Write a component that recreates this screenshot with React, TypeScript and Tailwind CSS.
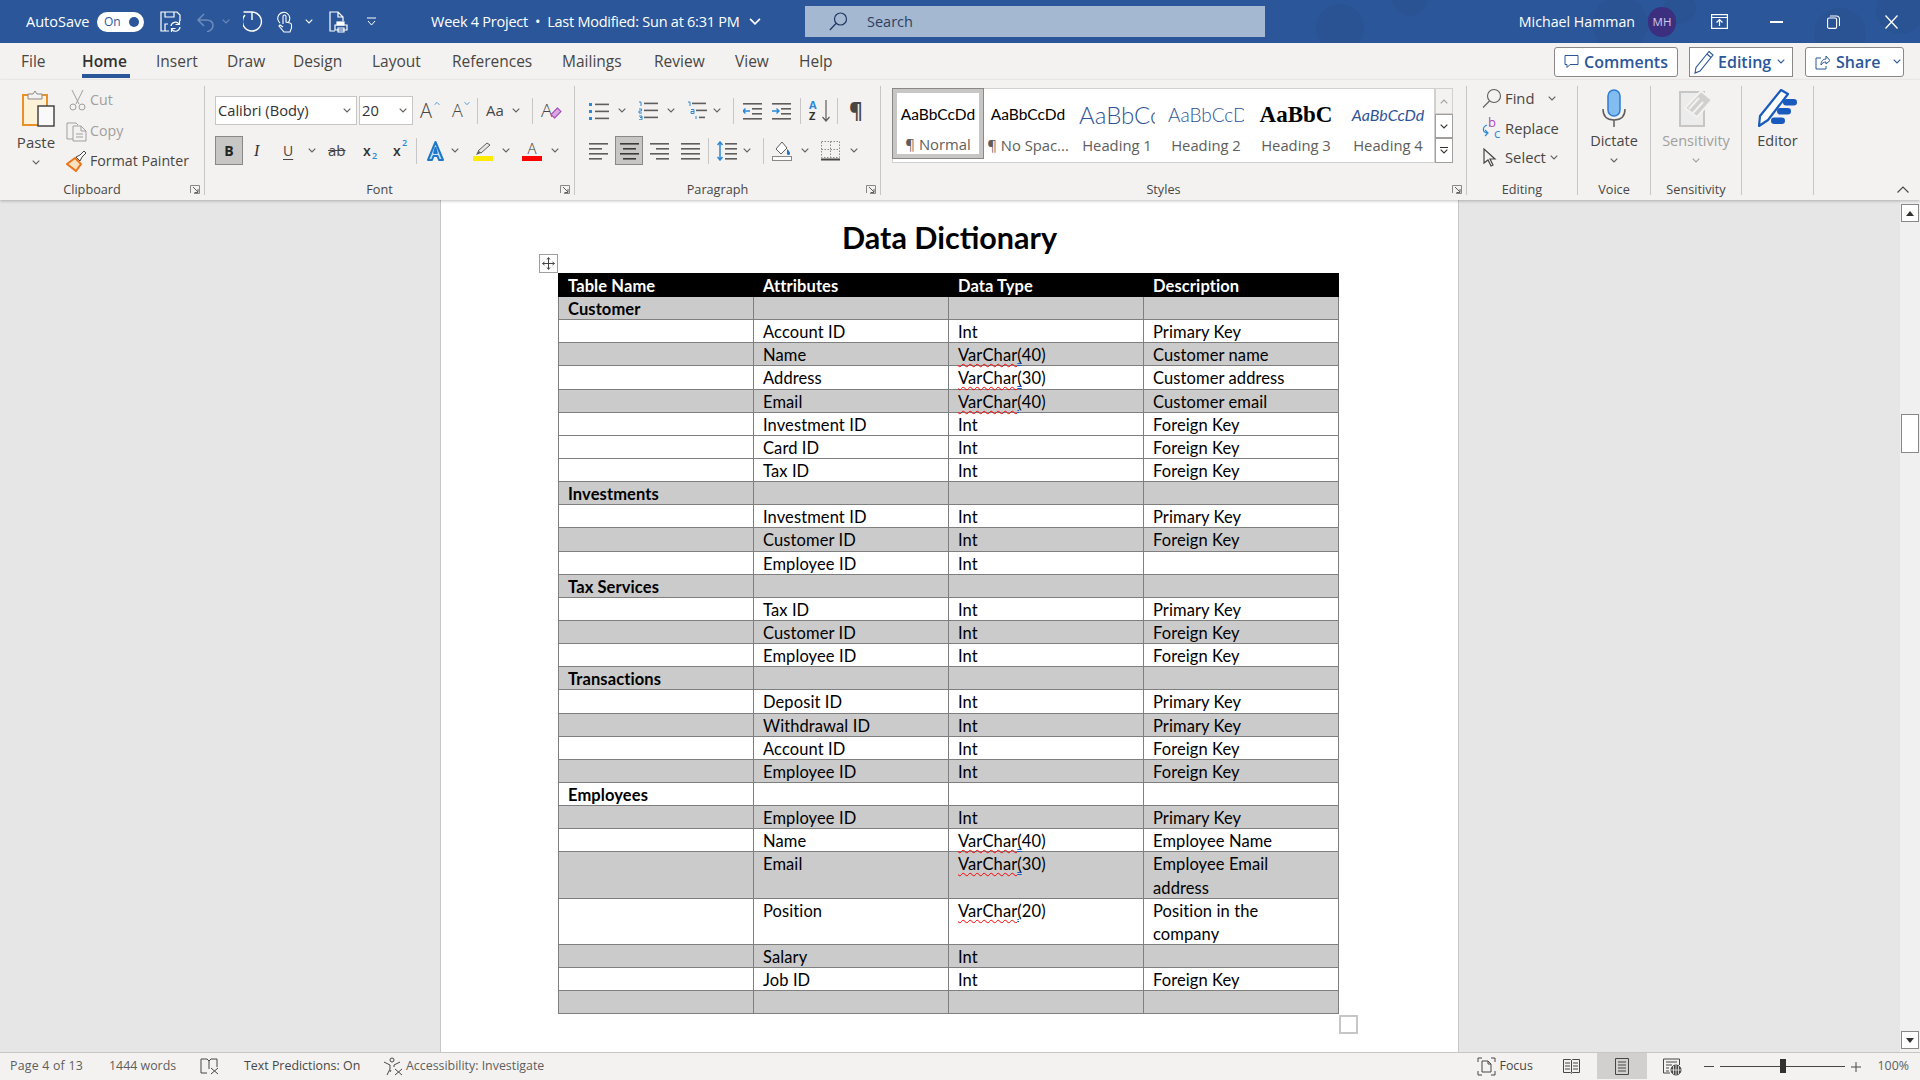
import type { ReactNode } from 'react';

const G = '#605e5c';
const BLUE = '#2b88d8';

function Chev({ className = '', color = G }: { className?: string; color?: string }) {
  return (
    <svg width="8" height="5" viewBox="0 0 8 5" className={`shrink-0 ${className}`}>
      <path d="M.7.7 4 4 7.3.7" fill="none" stroke={color} strokeWidth="1.1" />
    </svg>
  );
}

function Sep({ className = '' }: { className?: string }) {
  return <div className={`w-px h-[26px] bg-[#c8c6c4] shrink-0 ${className}`} />;
}

function Launcher() {
  return (
    <svg width="10" height="9" viewBox="0 0 10 9" className="absolute right-[4px] bottom-[1px]">
      <path d="M.5 8V.5H9.5V8.500H4" fill="none" stroke="#8a8886" />
      <path d="M3 2l5 5M8 4v3.500H4.500" fill="none" stroke={G} />
    </svg>
  );
}

function Group({ className, label, launcher, children }: { className: string; label: string; launcher?: boolean; children: ReactNode }) {
  return (
    <div className={`relative flex flex-col shrink-0 h-full border-r border-[#c8c6c4] ${className}`}>
      <div className="flex-1 min-h-0">{children}</div>
      <div className={`h-[10px] flex items-center justify-center text-[12.700px] text-[#484644] whitespace-nowrap ${launcher ? 'pr-[20px]' : ''}`}>{label}</div>
      {launcher && <Launcher />}
    </div>
  );
}

function AlignIcon({ kind }: { kind: 'l' | 'c' | 'r' | 'j' }) {
  const rows = [1, 6, 11, 16];
  const short = (i: number) => (i % 2 === 1 ? 6 : 0);
  return (
    <svg width="19" height="18" viewBox="0 0 19 18" className="shrink-0">
      {rows.map((y, i) => {
        const s = kind === 'j' ? 0 : short(i);
        const x = kind === 'l' || kind === 'j' ? 0 : kind === 'r' ? s : s / 2;
        return <rect key={y} x={x} y={y} width={19 - s} height="1.600" fill={kind === 'c' ? '#3b3a39' : G} />;
      })}
    </svg>
  );
}

function BulletIcon() {
  return (
    <svg width="20" height="18" viewBox="0 0 20 18" className="shrink-0">
      {[1, 8, 15].map((y) => (
        <g key={y}>
          <rect x="0" y={y} width="3" height="3" fill={BLUE} />
          <rect x="6" y={y + 0.6} width="14" height="1.600" fill={G} />
        </g>
      ))}
    </svg>
  );
}

function NumberIcon() {
  return (
    <svg width="20" height="19" viewBox="0 0 20 19" className="shrink-0">
      {[1, 8, 15].map((y) => (
        <rect key={y} x="6" y={y + 0.6} width="14" height="1.600" fill={G} />
      ))}
      <path d="M1 1h2v4M1 8h2.500v2h-2.500v2h3M1 15h3v1.500h-2h2v2.300h-3" fill="none" stroke={BLUE} strokeWidth="1" />
    </svg>
  );
}

function MultiIcon() {
  return (
    <svg width="20" height="19" viewBox="0 0 20 19" className="shrink-0">
      <rect x="5" y="1.600" width="14" height="1.600" fill={G} />
      <rect x="9" y="8.600" width="11" height="1.600" fill={G} />
      <rect x="12" y="15.600" width="6" height="1.600" fill={G} />
      <path d="M1 1h2v4M4 8.500h3v4h-3v-2h3M9 15v3" fill="none" stroke={BLUE} strokeWidth="1" />
    </svg>
  );
}

function IndentIcon({ inc }: { inc?: boolean }) {
  return (
    <svg width="19" height="18" viewBox="0 0 19 18" className="shrink-0">
      <rect x="0" y="1" width="19" height="1.600" fill={G} />
      <rect x="9" y="6" width="10" height="1.600" fill={G} />
      <rect x="9" y="11" width="10" height="1.600" fill={G} />
      <rect x="0" y="16" width="19" height="1.600" fill={G} />
      <path d={inc ? 'M0 9h7M4.500 6.500 7 9l-2.500 2.500' : 'M7 9H0M2.500 6.500 0 9l2.500 2.500'} fill="none" stroke={BLUE} strokeWidth="1.400" />
    </svg>
  );
}

const tabs = [
  ['File', 'w-[61px]'],
  ['Home', 'w-[74px]'],
  ['Insert', 'w-[71px]'],
  ['Draw', 'w-[66px]'],
  ['Design', 'w-[79px]'],
  ['Layout', 'w-[80px]'],
  ['References', 'w-[110px]'],
  ['Mailings', 'w-[92px]'],
  ['Review', 'w-[81px]'],
  ['View', 'w-[64px]'],
  ['Help', 'w-[50px]'],
];

type Row = [string, string, string, string, boolean, boolean?];

const rows: Row[] = [
  ['Customer', '', '', '', true],
  ['', 'Account ID', 'Int', 'Primary Key', false],
  ['', 'Name', 'VarChar(40)', 'Customer name', true],
  ['', 'Address', 'VarChar(30)', 'Customer address', false],
  ['', 'Email', 'VarChar(40)', 'Customer email', true],
  ['', 'Investment ID', 'Int', 'Foreign Key', false],
  ['', 'Card ID', 'Int', 'Foreign Key', false],
  ['', 'Tax ID', 'Int', 'Foreign Key', false],
  ['Investments', '', '', '', true],
  ['', 'Investment ID', 'Int', 'Primary Key', false],
  ['', 'Customer ID', 'Int', 'Foreign Key', true],
  ['', 'Employee ID', 'Int', '', false],
  ['Tax Services', '', '', '', true],
  ['', 'Tax ID', 'Int', 'Primary Key', false],
  ['', 'Customer ID', 'Int', 'Foreign Key', true],
  ['', 'Employee ID', 'Int', 'Foreign Key', false],
  ['Transactions', '', '', '', true],
  ['', 'Deposit ID', 'Int', 'Primary Key', false],
  ['', 'Withdrawal ID', 'Int', 'Primary Key', true],
  ['', 'Account ID', 'Int', 'Foreign Key', false],
  ['', 'Employee ID', 'Int', 'Foreign Key', true],
  ['Employees', '', '', '', false],
  ['', 'Employee ID', 'Int', 'Primary Key', true],
  ['', 'Name', 'VarChar(40)', 'Employee Name', false],
  ['', 'Email', 'VarChar(30)', 'Employee Email address', true, true],
  ['', 'Position', 'VarChar(20)', 'Position in the company', false, true],
  ['', 'Salary', 'Int', '', true],
  ['', 'Job ID', 'Int', 'Foreign Key', false],
  ['', '', '', '', true],
];

function TypeCell({ value }: { value: string }) {
  if (!value.startsWith('VarChar')) return <>{value}</>;
  return (
    <>
      <span className="underline decoration-wavy decoration-[#ff0000] decoration-1 underline-offset-[2px]">VarChar</span>
      <span className="underline decoration-[#1a5fd0] decoration-double decoration-1 underline-offset-[2px]">(</span>
      {value.slice(8)}
    </>
  );
}

const styleItems = [
  { name: '¶ Normal', sample: 'AaBbCcDd', w: 'w-[90px]', clip: '', cls: 'text-[15.500px] font-["Lato",sans-serif] text-black' },
  { name: '¶ No Spac...', sample: 'AaBbCcDd', w: 'w-[90px]', clip: '', cls: 'text-[15.500px] font-["Lato",sans-serif] text-black' },
  { name: 'Heading 1', sample: 'AaBbCc', w: 'w-[88px]', clip: 'max-w-[76px] overflow-hidden', cls: 'text-[24px] font-light font-["Lato",sans-serif] text-[#2f5496]' },
  { name: 'Heading 2', sample: 'AaBbCcD', w: 'w-[90px]', clip: 'max-w-[76px] overflow-hidden', cls: 'text-[19px] font-light font-["Lato",sans-serif] text-[#2f5496]' },
  { name: 'Heading 3', sample: 'AaBbC', w: 'w-[90px]', clip: '', cls: 'text-[23px] font-bold font-["Liberation_Serif",serif] text-black' },
  { name: 'Heading 4', sample: 'AaBbCcDd', w: 'w-[94px]', clip: '', cls: 'text-[16px] italic font-["Lato",sans-serif] text-[#2f5496]' },
];

export default function App() {
  return (
    <div className="w-[1920px] h-[1080px] flex flex-col overflow-hidden font-['Open_Sans',sans-serif] text-[14px] text-[#484644]">
      {/* title bar */}
      <div className="relative h-[43px] shrink-0 bg-[#2b579a] flex items-center text-white text-[14.500px] overflow-hidden">
        <svg className="absolute right-0 top-0" width="640" height="43" viewBox="0 0 640 43" fill="#274f8c" opacity="0.45">
          <circle cx="60" cy="28" r="24" />
          <circle cx="130" cy="-2" r="18" />
          <circle cx="340" cy="24" r="28" />
          <circle cx="400" cy="8" r="16" />
          <circle cx="560" cy="34" r="26" />
          <circle cx="620" cy="10" r="24" />
        </svg>
        <span className="relative ml-[26px] w-[71px] shrink-0 whitespace-nowrap">AutoSave</span>
        <div className="relative w-[47px] h-[20px] shrink-0 rounded-full bg-white flex items-center justify-between pl-[7px] pr-[5px] text-[12px] text-[#2b579a]">
          On<span className="w-[10px] h-[10px] rounded-full bg-[#2b579a]" />
        </div>
        <svg width="21" height="21" viewBox="0 0 21 21" className="relative ml-[16px] shrink-0" fill="none" stroke="#fff" strokeWidth="1.200">
          <path d="M9 20H1V1h16l3 3v6M5 1v5h9V1M5 20v-7h3" />
          <path d="M11 15a4.500 4.500 0 0 1 8-2M20 16a4.500 4.500 0 0 1-8 2.500M19.500 9.500v4h-4M11.500 21v-3.500h4" />
        </svg>
        <svg width="18" height="20" viewBox="0 0 18 20" className="relative ml-[15px] shrink-0" fill="none" stroke="#6d8cbc" strokeWidth="1.500">
          <path d="M8 2 2 8l6 6M2 8h8c5 0 7 2.500 7 5.500S15 18.500 11 20" />
        </svg>
        <Chev className="relative ml-[8px]" color="#6d8cbc" />
        <svg width="21" height="21" viewBox="0 0 21 21" className="relative ml-[13px] shrink-0" fill="none" stroke="#fff" strokeWidth="1.400">
          <path d="M.5 1H9v8M9 1a9.500 9.500 0 1 1-7 3" />
        </svg>
        <svg width="16" height="22" viewBox="0 0 16 22" className="relative ml-[13px] shrink-0" fill="none" stroke="#fff" strokeWidth="1.100">
          <path d="M6 13V5.500a1.500 1.500 0 0 1 3 0V11l4 1a2 2 0 0 1 1.500 2v3L13 21H7l-5-6 1-1 3 2" />
          <path d="M3 12a6 6 0 1 1 8.500-1" />
        </svg>
        <Chev className="relative ml-[12px]" color="#fff" />
        <svg width="19" height="22" viewBox="0 0 19 22" className="relative ml-[16px] shrink-0" fill="none" stroke="#fff" strokeWidth="1.200">
          <path d="M6 20H1V1h8l5 5v4M9 1v5h5" />
          <rect x="8" y="11" width="7" height="3" fill="#fff" />
          <path d="M6 14h12v5H6zM9 17h6v4H9z" />
        </svg>
        <svg width="9" height="9" viewBox="0 0 9 9" className="relative ml-[19px] shrink-0" fill="none" stroke="#fff">
          <path d="M0 1h9M1 4l3.500 4L8 4" />
        </svg>
        <span className="relative ml-[55px] w-[320px] shrink-0 whitespace-nowrap tracking-[-0.25px]">Week 4 Project&nbsp; •&nbsp; Last Modified: Sun at 6:31 PM</span>
        <Chev className="relative scale-150" color="#fff" />
        <div className="relative ml-[46px] w-[460px] h-[31px] shrink-0 bg-[#a5b8d2] flex items-center text-[#2b3f5f]">
          <svg width="19" height="19" viewBox="0 0 19 19" className="ml-[24px] shrink-0" fill="none" stroke="#1f3763" strokeWidth="1.200">
            <circle cx="11.500" cy="7" r="6" />
            <path d="M7 11.500.8 18" />
          </svg>
          <span className="ml-[19px]">Search</span>
        </div>
        <span className="relative ml-auto whitespace-nowrap text-[14.200px]">Michael Hamman</span>
        <div className="relative ml-[13px] w-[28px] h-[30px] shrink-0 rounded-full bg-[#3c2f80] flex items-center justify-center text-[11.500px] text-[#cfcbe8]">MH</div>
        <svg width="17" height="15" viewBox="0 0 17 15" className="relative ml-[35px] shrink-0" fill="none" stroke="#fff" strokeWidth="1.200">
          <rect x=".6" y=".6" width="15.800" height="13.800" />
          <path d="M.6 3.500h15.800M8.500 12V6M5.500 8.500l3-3 3 3" />
        </svg>
        <div className="relative ml-[42px] w-[13px] h-[2px] shrink-0 bg-white" />
        <svg width="13" height="14" viewBox="0 0 13 14" className="relative ml-[44px] shrink-0" fill="none" stroke="#fff" strokeWidth="1.100">
          <rect x=".6" y="3" width="9" height="10.400" rx="1.500" />
          <path d="M3 1h6.500a3 3 0 0 1 3 3v7" />
        </svg>
        <svg width="13" height="14" viewBox="0 0 13 14" className="relative ml-[45px] mr-[22px] shrink-0" fill="none" stroke="#fff" strokeWidth="1.300">
          <path d="M.5.500l12 13M12.500.500l-12 13" />
        </svg>
      </div>

      {/* tabs */}
      <div className="h-[37px] shrink-0 bg-[#f3f2f1] flex items-center pl-[21px] text-[15.500px]">
        {tabs.map(([name, w]) => (
          <div key={name} className={`${w} shrink-0`}>
            {name === 'Home' ? (
              <span className="relative font-semibold text-[#323130]">
                {name}
                <span className="absolute left-0 w-[48px] top-[24px] h-[4px] bg-[#2b579a]" />
              </span>
            ) : (
              name
            )}
          </div>
        ))}
        <div className="ml-auto mr-[16px] flex items-center text-[16px] font-semibold text-[#2b579a]">
          <div className="w-[124px] h-[30px] bg-white border border-[#8a8886] rounded-[3px] flex items-center pl-[9px]">
            <svg width="15" height="15" viewBox="0 0 15 15" fill="none" stroke="#2b579a" className="shrink-0">
              <path d="M1 1.500h13v9H6l-3 3v-3H1z" />
            </svg>
            <span className="ml-[5px]">Comments</span>
          </div>
          <div className="ml-[11px] w-[104px] h-[30px] bg-white border border-[#8a8886] flex items-center pl-[4px]">
            <svg width="20" height="24" viewBox="0 0 20 24" fill="none" stroke="#2b579a" strokeWidth="1.100" className="shrink-0">
              <path d="M15 1.500 19 5 6 21l-5 2 1-5.500zM13 4l4 3.500" />
            </svg>
            <span className="ml-[4px]">Editing</span>
            <Chev className="ml-[6px]" color="#2b579a" />
          </div>
          <div className="ml-[12px] w-[99px] h-[30px] bg-white border border-[#8a8886] rounded-[3px] flex items-center pl-[9px]">
            <svg width="15" height="16" viewBox="0 0 15 16" fill="none" stroke="#2b579a" className="shrink-0">
              <path d="M6 4H1v11h10v-3M6 11c0-4 2-6 5-6V2l4 4.500L11 10V8c-2 0-4 1-5 3z" />
            </svg>
            <span className="ml-[6px]">Share</span>
            <Chev className="ml-[13px]" color="#2b579a" />
          </div>
        </div>
      </div>

      {/* ribbon */}
      <div className="relative z-10 h-[120px] shrink-0 bg-[#f3f2f1] flex pt-[6px] pb-[5px] shadow-[0_1px_3px_rgba(0,0,0,0.25)] text-[14.200px]">
        <Group className="w-[205px]" label="Clipboard" launcher>
          <div className="flex h-full">
            <div className="w-[54px] shrink-0 pl-[18px] flex flex-col items-center pt-[4px]">
              <svg width="33" height="37" viewBox="0 0 33 37" className="ml-[5px] shrink-0">
                <rect x="1" y="5" width="24" height="30" fill="#fdf1d8" stroke="#e8912b" strokeWidth="2" />
                <path d="M6 9V4h5l2-3 2 3h5v5z" fill="#f3f2f1" stroke="#8a8886" />
                <rect x="16" y="16" width="16" height="20" fill="#f9f9f9" stroke="#484644" strokeWidth="1.500" />
              </svg>
              <span className="mt-[4px] text-[15px]">Paste</span>
              <Chev className="mt-[6px]" />
            </div>
            <div className="ml-[12px] flex flex-col pt-[2px]">
              <div className="h-[24px] flex items-center text-[#a19f9d]">
                <svg width="24" height="22" viewBox="0 0 24 22" fill="none" stroke="#a19f9d" className="shrink-0">
                  <path d="M6 1l7 14M17 1l-7 14" />
                  <circle cx="7" cy="18" r="3" />
                  <circle cx="16" cy="18" r="3" />
                </svg>
                <span>Cut</span>
              </div>
              <div className="mt-[7px] h-[24px] flex items-center text-[#a19f9d]">
                <svg width="24" height="22" viewBox="0 0 24 22" fill="none" stroke="#a19f9d" className="shrink-0">
                  <path d="M7 19H1V3h9l2 2" />
                  <path d="M7 6h8l5 5v10H7zM15 6v5h5M10 14h7M10 17h7" />
                </svg>
                <span>Copy</span>
              </div>
              <div className="mt-[6px] h-[24px] flex items-center whitespace-nowrap">
                <svg width="24" height="22" viewBox="0 0 24 22" className="shrink-0">
                  <path d="M1 14 9 8l6 6-5 7z" fill="#fbe0c0" stroke="#e8751a" strokeWidth="2" />
                  <path d="M10 7l4-2 4-4 2 2-4 4-2 4z" fill="#f9f9f9" stroke="#484644" />
                </svg>
                <span>Format Painter</span>
              </div>
            </div>
          </div>
        </Group>

        <Group className="w-[370px]" label="Font" launcher>
          <div className="pl-[10px] pt-[10px] flex flex-col gap-[11px]">
            <div className="h-[29px] flex items-center">
              <div className="w-[142px] h-[29px] bg-white border border-[#c8c6c4] flex items-center justify-between pl-[2px] pr-[5px] text-[14.700px] text-[#323130]">
                Calibri (Body)<Chev />
              </div>
              <div className="ml-[2px] w-[54px] h-[29px] bg-white border border-[#c8c6c4] flex items-center justify-between pl-[2px] pr-[5px] text-[14.700px] text-[#323130]">
                20<Chev />
              </div>
              <span className="ml-[7px] w-[19px] text-[20px] font-light relative">
                A<Chev className="absolute left-[13px] top-[5px] rotate-180 scale-75" color="#2b88d8" />
              </span>
              <span className="ml-[13px] w-[17px] text-[18px] font-light relative">
                A<Chev className="absolute left-[11px] top-[4px] scale-75" color="#2b88d8" />
              </span>
              <Sep className="ml-[8px]" />
              <span className="ml-[8px] w-[21px] text-[15px]">Aa</span>
              <Chev className="ml-[5px]" />
              <Sep className="ml-[12px]" />
              <span className="ml-[8px] w-[20px] text-[19px] font-light relative">
                A<span className="absolute left-[10px] top-[14px] w-[10px] h-[6px] -rotate-45 border-[1.500px] border-[#a34ab5] bg-[#d9a8e3]" />
              </span>
            </div>
            <div className="h-[29px] flex items-center">
              <div className="w-[28px] h-[29px] bg-[#c8c6c4] border border-[#8a8886] flex items-center justify-center text-[14px] font-bold text-[#252423]">B</div>
              <span className="ml-[11px] w-[9px] text-[16px] italic font-['Liberation_Serif',serif] text-[#323130]">I</span>
              <span className="ml-[20px] w-[11px] text-[14px] underline underline-offset-[3px]">U</span>
              <Chev className="ml-[14px]" />
              <span className="ml-[12px] w-[20px] text-[15px] line-through">ab</span>
              <span className="ml-[15px] w-[14px] text-[14px] font-semibold text-[#323130] relative">
                x<span className="absolute left-[9px] top-[9px] text-[9px] text-[#2b88d8]">2</span>
              </span>
              <span className="ml-[16px] w-[14px] text-[14px] font-semibold text-[#323130] relative">
                x<span className="absolute left-[9px] top-[-4px] text-[9px] text-[#2b88d8]">2</span>
              </span>
              <Sep className="ml-[9px]" />
              <svg width="19" height="22" viewBox="0 0 19 22" className="ml-[9px] shrink-0">
                <path d="M9.500 2 2 20h4l1.500-4h4l1.500 4h4zM9.500 8l1.300 5H8.200z" fill="#bfe0f7" stroke="#1e77c8" strokeWidth="2" strokeLinejoin="round" />
              </svg>
              <Chev className="ml-[6px]" />
              <div className="ml-[14px] w-[20px] flex flex-col items-center shrink-0">
                <svg width="18" height="15" viewBox="0 0 18 15">
                  <path d="M2 14l2-4 3 2z" fill="#605e5c" />
                  <path d="M4 10l9-8 3 2-9 8z" fill="#e8e6e4" stroke="#605e5c" />
                </svg>
                <div className="w-[20px] h-[5px] bg-[#ffeb00]" />
              </div>
              <Chev className="ml-[9px]" />
              <div className="ml-[12px] w-[20px] flex flex-col items-center shrink-0">
                <span className="text-[15px] leading-[15px] font-light text-[#323130]">A</span>
                <div className="w-[20px] h-[5px] bg-[#ff0000]" />
              </div>
              <Chev className="ml-[9px]" />
            </div>
          </div>
        </Group>

        <Group className="w-[306px]" label="Paragraph" launcher>
          <div className="pl-[14px] pt-[10px] flex flex-col gap-[11px]">
            <div className="h-[29px] flex items-center">
              <BulletIcon />
              <Chev className="ml-[9px]" />
              <div className="ml-[12px]"><NumberIcon /></div>
              <Chev className="ml-[9px]" />
              <div className="ml-[12px]"><MultiIcon /></div>
              <Chev className="ml-[6px]" />
              <Sep className="ml-[12px]" />
              <div className="ml-[9px]"><IndentIcon /></div>
              <div className="ml-[10px]"><IndentIcon inc /></div>
              <Sep className="ml-[9px]" />
              <div className="ml-[8px] w-[21px] h-[24px] relative shrink-0 flex flex-col items-start text-[11px] leading-[11.500px] font-bold">
                <span className="text-[#2b88d8]">A</span>
                <span className="text-[#323130]">Z</span>
                <svg width="8" height="22" viewBox="0 0 8 22" className="absolute right-0 top-[1px]" fill="none" stroke={G} strokeWidth="1.200">
                  <path d="M4 0v21M.5 17 4 21l3.500-4" />
                </svg>
              </div>
              <Sep className="ml-[7px]" />
              <span className="ml-[11px] text-[21px] leading-[21px] font-bold text-[#484644]">¶</span>
            </div>
            <div className="h-[29px] flex items-center">
              <AlignIcon kind="l" />
              <div className="ml-[7px] w-[28px] h-[29px] shrink-0 bg-[#c8c6c4] border border-[#8a8886] flex items-center justify-center">
                <AlignIcon kind="c" />
              </div>
              <div className="ml-[7px]"><AlignIcon kind="r" /></div>
              <div className="ml-[12px]"><AlignIcon kind="j" /></div>
              <Sep className="ml-[8px]" />
              <svg width="20" height="20" viewBox="0 0 20 20" className="ml-[8px] shrink-0">
                {[2, 7, 12, 17].map((y) => (
                  <rect key={y} x="8" y={y} width="12" height="1.600" fill={G} />
                ))}
                <path d="M3 1v18M.5 4 3 1l2.500 3M.5 16 3 19l2.500-3" fill="none" stroke={BLUE} strokeWidth="1.500" />
              </svg>
              <Chev className="ml-[6px]" />
              <Sep className="ml-[12px]" />
              <svg width="20" height="20" viewBox="0 0 20 20" className="ml-[8px] shrink-0">
                <path d="M10 1 4 8l5 5 6-6z" fill="#fff" stroke={G} />
                <path d="M15 8c2 2 3 3 3 4.500a1.500 1.500 0 0 1-3 0z" fill="#1e77c8" />
                <rect x=".5" y="15.500" width="19" height="4" fill="#fff" stroke="#8a8886" />
              </svg>
              <Chev className="ml-[9px]" />
              <svg width="19" height="20" viewBox="0 0 19 20" className="ml-[12px] shrink-0" fill="none">
                <path d="M.5.500h18v16H.5zM9.500.500v16M.5 8.500h18" stroke="#8a8886" strokeDasharray="1.500 1.500" />
                <rect x="0" y="17.500" width="19" height="2" fill="#484644" />
              </svg>
              <Chev className="ml-[10px]" />
            </div>
          </div>
        </Group>

        <Group className="w-[586px]" label="Styles" launcher>
          <div className="pl-[11px] pt-[2px] flex">
            <div className="w-[543px] h-[75px] bg-white border border-[#d2d0ce] flex">
              {styleItems.map((s, i) => (
                <div
                  key={s.name}
                  className={`${s.w} h-[69px] shrink-0 flex flex-col items-center ${i === 0 ? 'border-[4px] border-[#c8c6c4] outline outline-[#8a8886] pt-[2px]' : 'pt-[6px]'}`}
                >
                  <div className={`h-[40px] flex items-center whitespace-nowrap ${s.clip}`}>
                    <span className={s.cls}>{s.sample}</span>
                  </div>
                  <span className="h-[20px] flex items-center whitespace-nowrap text-[14.800px] text-[#605e5c]">{s.name}</span>
                </div>
              ))}
            </div>
            <div className="w-[18px] h-[75px] flex flex-col shrink-0">
              <div className="h-[26px] bg-[#f3f2f1] border border-[#d2d0ce] flex items-center justify-center">
                <Chev className="rotate-180" color="#a19f9d" />
              </div>
              <div className="h-[24px] bg-white border border-[#a19f9d] flex items-center justify-center">
                <Chev color="#323130" />
              </div>
              <div className="h-[25px] bg-white border border-[#a19f9d] flex flex-col items-center justify-center gap-[1px]">
                <div className="w-[8px] h-px bg-[#323130]" />
                <Chev color="#323130" />
              </div>
            </div>
          </div>
        </Group>

        <Group className="w-[111px] text-[14.800px]" label="Editing">
          <div className="pl-[15px] flex flex-col">
            <div className="h-[24px] flex items-center">
              <svg width="23" height="20" viewBox="0 0 23 20" fill="none" stroke={G} strokeWidth="1.100" className="shrink-0">
                <circle cx="12" cy="8" r="6.500" />
                <path d="M7.500 13 1 19.500" />
              </svg>
              <span>Find</span>
              <Chev className="ml-[13px]" />
            </div>
            <div className="mt-[6px] h-[24px] flex items-center">
              <svg width="23" height="24" viewBox="0 0 23 24" fill="none" className="shrink-0">
                <text x="6" y="11" fontSize="13" fill="#b146c2" fontFamily="Open Sans">b</text>
                <text x="12" y="22" fontSize="13" fill="#2b88d8" fontFamily="Open Sans">c</text>
                <path d="M5 9C0 11 0 17 6 17M3 14l3 3-3 3" stroke="#2b88d8" strokeWidth="1.200" />
              </svg>
              <span>Replace</span>
            </div>
            <div className="mt-[5px] h-[24px] flex items-center">
              <svg width="23" height="19" viewBox="0 0 23 19" fill="none" stroke="#484644" strokeWidth="1.200" className="shrink-0">
                <path d="M2 1v14l4-3 3 6 2-1-3-6h5z" />
              </svg>
              <span>Select</span>
              <Chev className="ml-[4px]" />
            </div>
          </div>
        </Group>

        <Group className="w-[73px] text-[14.500px]" label="Voice">
          <div className="flex flex-col items-center pt-[3px]">
            <svg width="24" height="38" viewBox="0 0 24 38" className="shrink-0">
              <rect x="6" y="1" width="12" height="26" rx="6" fill="#83bdf0" stroke="#2b7cd3" strokeWidth="1.500" />
              <path d="M1 20c0 7 4 11 11 11s11-4 11-11M12 31v7" fill="none" stroke="#605e5c" strokeWidth="1.500" />
            </svg>
            <span className="mt-[3px]">Dictate</span>
            <Chev className="mt-[6px]" />
          </div>
        </Group>

        <Group className="w-[91px] text-[14.500px]" label="Sensitivity">
          <div className="flex flex-col items-center pt-[3px] text-[#a19f9d]">
            <svg width="34" height="38" viewBox="0 0 34 38" className="shrink-0" fill="none" stroke="#c8c6c4" strokeWidth="2">
              <path d="M25 37H1V3h24z" fill="#ececec" />
              <path d="M6 19 22 2l11 9-15 17z" fill="#d2d0ce" stroke="#f3f2f1" />
              <path d="M10 20l10-11M14 24l10-11" stroke="#f3f2f1" />
            </svg>
            <span className="mt-[3px]">Sensitivity</span>
            <Chev className="mt-[6px]" color="#a19f9d" />
          </div>
        </Group>

        <Group className="w-[72px] text-[14.500px]" label="">
          <div className="flex flex-col items-center pt-[3px]">
            <svg width="40" height="38" viewBox="0 0 40 38" className="shrink-0">
              <rect x="25" y="10" width="14" height="6.500" rx="3.200" fill="#185abd" />
              <rect x="19" y="19" width="14" height="6.500" rx="3.200" fill="#185abd" />
              <rect x="13" y="28.500" width="14" height="6.500" rx="3.200" fill="#185abd" />
              <path d="M23 1 30 5 10 31 1 37 2 27z" fill="#fff" stroke="#185abd" strokeWidth="2.200" strokeLinejoin="round" />
            </svg>
            <span className="mt-[3px]">Editor</span>
          </div>
        </Group>

        <svg width="12" height="7" viewBox="0 0 12 7" className="absolute right-[11px] bottom-[7px]" fill="none" stroke="#484644" strokeWidth="1.100">
          <path d="M.5 6.500 6 1l5.500 5.500" />
        </svg>
      </div>

      {/* document */}
      <div className="flex-1 min-h-0 bg-[#e6e6e6] flex">
        <div className="ml-[440px] w-[1019px] shrink-0 bg-white border-x border-[#c8c6c4] pl-[117px] pt-[17px] relative">
          <h1 className="w-[781px] h-[40px] pl-[2px] leading-[40px] text-center text-[30.500px] font-bold text-black font-['Lato',sans-serif]">Data Dictionary</h1>
          <svg width="19" height="19" viewBox="0 0 19 19" className="absolute left-[98px] top-[54px]" fill="#fff" stroke="#a19f9d">
            <rect x=".5" y=".5" width="18" height="18" />
            <path d="M9.500 4v11M4 9.500h11M8 5.500l1.500-2 1.500 2M8 13.500l1.500 2 1.500-2M5.500 8l-2 1.500 2 1.500M13.500 8l2 1.500-2 1.500" fill="none" stroke="#484644" />
          </svg>
          <div className="mt-[16px] w-[781px] font-['Lato',sans-serif] text-[16.500px] text-black tracking-[0.1px]">
            <div className="h-[24px] pt-px bg-black text-white font-bold grid grid-cols-[195px_195px_195px_195px] items-center">
              {['Table Name', 'Attributes', 'Data Type', 'Description'].map((h) => (
                <div key={h} className="pl-[10px]">{h}</div>
              ))}
            </div>
            <div className="border-x border-[#7f7f7f]">
              {rows.map((r, i) => (
                <div
                  key={i}
                  className={`grid grid-cols-[195px_195px_195px_194px] border-b border-[#7f7f7f] ${r[4] ? 'bg-[#cbcbcb]' : 'bg-white'} ${r[5] ? 'h-[46.300px]' : 'h-[23.150px]'}`}
                >
                  <div className="pl-[9px] pt-px border-r border-[#7f7f7f] font-bold leading-[23.150px]">{r[0]}</div>
                  <div className="pl-[9px] pt-px border-r border-[#7f7f7f] leading-[23.150px]">{r[1]}</div>
                  <div className="pl-[9px] pt-px border-r border-[#7f7f7f] leading-[23.150px]"><TypeCell value={r[2]} /></div>
                  <div className="pl-[9px] pt-px pr-[24px] leading-[23.150px]">{r[3]}</div>
                </div>
              ))}
            </div>
          </div>
          <div className="absolute left-[898px] top-[815px] w-[19px] h-[19px] bg-white border-2 border-[#c8c6c4]" />
        </div>
        <div className="ml-auto w-[20px] shrink-0 bg-[#f0f0f0] flex flex-col pt-[4px] pb-[3px] pl-px">
          <div className="w-[18px] h-[18px] bg-white border border-[#8a8886] flex items-center justify-center">
            <div className="w-0 h-0 border-x-[4px] border-x-transparent border-b-[5px] border-b-[#323130]" />
          </div>
          <div className="mt-[192px] w-[18px] h-[39px] bg-white border border-[#8a8886]" />
          <div className="mt-auto w-[18px] h-[18px] bg-white border border-[#8a8886] flex items-center justify-center">
            <div className="w-0 h-0 border-x-[4px] border-x-transparent border-t-[5px] border-t-[#323130]" />
          </div>
        </div>
      </div>

      {/* status bar */}
      <div className="h-[28px] shrink-0 bg-[#f3f2f1] border-t border-[#c8c6c4] flex items-center text-[12.400px] text-[#605e5c] whitespace-nowrap">
        <span className="ml-[10px] w-[99px] shrink-0 tracking-[0.2px]">Page 4 of 13</span>
        <span className="w-[91px] shrink-0">1444 words</span>
        <svg width="19" height="17" viewBox="0 0 19 17" className="shrink-0" fill="none" stroke="#484644">
          <path d="M7 15H1V1h6l2 2 2-2h6v8M9 3v8" />
          <path d="M11 10l7 6M18 10l-7 6" />
        </svg>
        <span className="ml-[25px] w-[139px] shrink-0 text-[#484644]">Text Predictions: On</span>
        <svg width="20" height="19" viewBox="0 0 20 19" className="shrink-0" fill="none" stroke="#484644">
          <circle cx="9" cy="3" r="2" />
          <path d="M1 5l6 3v4l-3 6M17 5l-6 3v2M8 13l-1 2" />
          <path d="M12 12l7 6M19 12l-7 6" />
        </svg>
        <span className="ml-[3px]">Accessibility: Investigate</span>
        <svg width="19" height="19" viewBox="0 0 19 19" className="ml-auto shrink-0" fill="none" stroke="#484644">
          <path d="M1 5V1h4M14 1h4v4M1 14v4h4M14 18h4v-4" />
          <path d="M5 4h6l3 3v8H5zM11 4v3h3" />
        </svg>
        <span className="ml-[4px] w-[63px] shrink-0 text-[#484644]">Focus</span>
        <svg width="17" height="17" viewBox="0 0 17 17" className="shrink-0" fill="none" stroke="#484644">
          <path d="M.5 1.500h7l1 1 1-1h7v13h-7l-1 1-1-1h-7zM8.500 2.500v12M2 5h5M2 8h5M2 11h5M10 5h5M10 8h5M10 11h5" />
        </svg>
        <div className="ml-[17px] w-[50px] h-[26px] shrink-0 self-start bg-[#d2d0ce] flex items-center justify-center">
          <svg width="14" height="17" viewBox="0 0 14 17" fill="none" stroke="#484644">
            <path d="M.5.500h13v16H.5zM3 4h8M3 7h8M3 10h8M3 13h8" />
          </svg>
        </div>
        <svg width="19" height="18" viewBox="0 0 19 18" className="ml-[16px] shrink-0" fill="none" stroke="#484644">
          <path d="M7 15H.5V1h16v6M3 4h11M3 7h6M3 10h3M3 13h3" />
          <circle cx="13" cy="12" r="5" fill="#484644" />
          <path d="M8 12h10M13 7v10M10.500 8v8M15.500 8v8" stroke="#f3f2f1" strokeWidth=".8" />
        </svg>
        <div className="ml-[22px] w-[10px] h-px bg-[#484644] shrink-0" />
        <div className="relative ml-[6px] w-[125px] h-px bg-[#484644] shrink-0">
          <div className="absolute left-[60px] top-[-7px] w-[6px] h-[14px] bg-[#323130]" />
        </div>
        <svg width="10" height="10" viewBox="0 0 10 10" className="ml-[6px] shrink-0" stroke="#484644">
          <path d="M0 5h10M5 0v10" />
        </svg>
        <span className="ml-[17px] mr-[11px]">100%</span>
      </div>
    </div>
  );
}
